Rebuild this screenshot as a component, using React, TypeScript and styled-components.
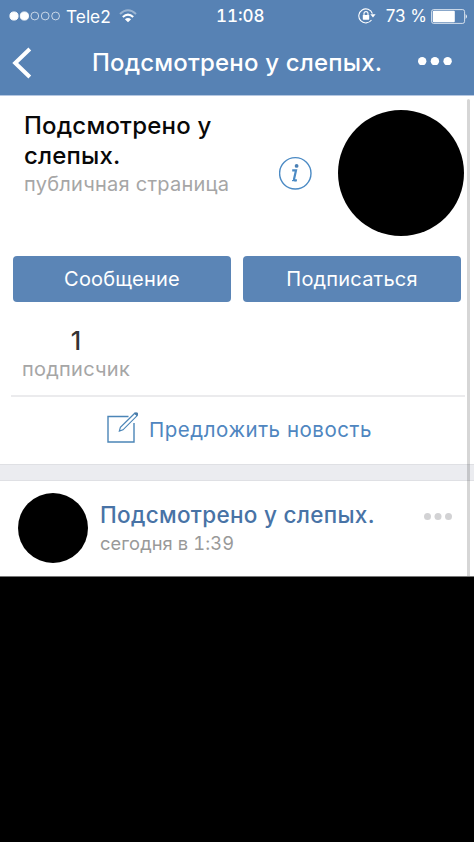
import React from "react";
import styled, { createGlobalStyle } from "styled-components";

const GlobalStyle = createGlobalStyle`
  * { box-sizing: border-box; }
  body { margin: 0; background: #000; font-family: Inter, "Liberation Sans", sans-serif; }
`;

const Screen = styled.main`
  width: 474px;
  height: 842px;
  overflow: hidden;
  background: #000;
`;

const Header = styled.header`
  height: 96px;
  background: #5782b4;
  border-bottom: 1px solid #b5c7e1;
  color: #fff;
`;

const StatusBar = styled.div`
  display: grid;
  grid-template-columns: 216px 1fr auto;
  align-items: center;
  height: 31px;
  padding: 0 6px 0 0;
  line-height: 31px;
`;

const Carrier = styled.div`
  display: flex;
  align-items: center;
  padding-left: 9px;
`;

const CarrierName = styled.span`
  width: 44px;
  margin: 0 9px 0 5px;
  font-size: 17.3px;
`;

const Clock = styled.span`
  padding-top: 1px;
  font-size: 17px;
  font-weight: 500;
  font-variant-numeric: tabular-nums;
`;

const Power = styled.div`
  display: flex;
  align-items: center;
`;

const Percent = styled.span`
  padding-top: 1px;
  margin: 0 4px 0 10px;
  font-size: 17px;
`;

const NavBar = styled.nav`
  display: flex;
  align-items: center;
  height: 64px;
  padding: 0 22px 0 12px;
`;

const NavTitle = styled.h1`
  flex: 1;
  margin: 0 0 0 60px;
  font-size: 24px;
  font-weight: 500;
  letter-spacing: 0.18px;
  line-height: 32px;
  white-space: nowrap;
`;

const Content = styled.div`
  position: relative;
  height: 481px;
  border-bottom: 1px solid #777;
  background: #fff;
`;

const ScrollBar = styled.div`
  position: absolute;
  top: 3px;
  right: 4px;
  bottom: 0;
  width: 3px;
  border-radius: 2px 2px 0 0;
  background: rgba(0, 0, 0, 0.16);
`;

const Profile = styled.section`
  display: flex;
  height: 160px;
  padding: 14px 9px 0 24px;
`;

const ProfileText = styled.div`
  width: 255px;
`;

const ProfileName = styled.h2`
  margin: 1px 0 0;
  font-size: 24px;
  font-weight: 500;
  letter-spacing: 0.2px;
  line-height: 29.5px;
  color: #080808;
`;

const Caption = styled.div`
  font-size: 20px;
  letter-spacing: 0.25px;
  line-height: 28px;
  color: #a6a6a6;
`;

const InfoIcon = styled.svg`
  flex: none;
  margin: 46px 25px 0 0;
`;

const Avatar = styled.div<{ $size: number }>`
  flex: none;
  width: ${(p) => p.$size}px;
  height: ${(p) => p.$size}px;
  border-radius: 50%;
  background: #000;
`;

const Actions = styled.div`
  display: flex;
  gap: 12px;
  padding-left: 13px;
`;

const ActionButton = styled.button`
  width: 218px;
  height: 46px;
  padding: 0;
  border: 0;
  border-radius: 4px;
  background: #5b85b6;
  color: #fff;
  font: 400 20px/46px Inter, "Liberation Sans", sans-serif;
  letter-spacing: 0.2px;
`;

const Counters = styled.section`
  height: 95px;
  margin: 0 9px 0 11px;
  padding-top: 25px;
  border-bottom: 2px solid #ebebed;
`;

const Counter = styled.div`
  width: 130px;
  text-align: center;
`;

const CounterValue = styled.div`
  font-size: 25px;
  font-weight: 500;
  line-height: 28px;
  color: #333;
`;

const Suggest = styled.a`
  display: flex;
  height: 67px;
  padding: 13px 0 0 106px;
  color: #4f86c0;
  font-size: 20.5px;
  letter-spacing: 0.53px;
  line-height: 39px;
`;

const SuggestLabel = styled.span`
  margin-left: 10px;
`;

const Divider = styled.div`
  height: 17px;
  border: solid #dfe0e4;
  border-width: 1px 0;
  background: #ebecf0;
`;

const Post = styled.article`
  display: flex;
  height: 95px;
  padding: 12px 22px 0 18px;
`;

const PostText = styled.div`
  flex: 1;
  padding: 7px 0 0 12px;
`;

const PostAuthor = styled.div`
  font-size: 22.5px;
  font-weight: 500;
  letter-spacing: 0.3px;
  line-height: 30px;
  color: #4873a6;
`;

const PostDate = styled.div`
  font-size: 18.3px;
  letter-spacing: 0.1px;
  line-height: 26px;
  color: #999;
  font-variant-numeric: tabular-nums;
`;

const DotsIcon = styled.svg<{ $lift: number }>`
  flex: none;
  margin-bottom: ${(p) => p.$lift}px;
`;

type DotsProps = { r: number; step: number; color: string; top?: number; lift?: number };

const Dots = ({ r, step, color, top = 0, lift = 0 }: DotsProps) => (
  <DotsIcon $lift={lift} width={2 * step + 2 * r} height={2 * r + top * 2} fill={color}>
    {[0, 1, 2].map((i) => (
      <circle key={i} cx={r + i * step} cy={r + top} r={r} />
    ))}
  </DotsIcon>
);

const Signal = () => (
  <svg width="52" height="12" fill="none" stroke="#fff" strokeWidth="0.9">
    {[0, 1, 2, 3, 4].map((i) => (
      <circle
        key={i}
        cx={5 + i * 10.4}
        cy="6"
        r={i < 2 ? 4.1 : 3.9}
        fill={i < 2 ? "#fff" : "none"}
        strokeOpacity={i < 2 ? 1 : 0.75}
      />
    ))}
  </svg>
);

const Wifi = () => (
  <svg width="18" height="14" viewBox="0 0 18 14" fill="none" stroke="#fff" strokeWidth="2">
    <path d="M1 5Q9-2.4 17 5" opacity="0.4" />
    <path d="M3.8 8Q9 3.2 14.2 8" />
    <path d="M9 13.3L5.9 10.3Q9 7.8 12.1 10.3Z" fill="#fff" stroke="none" />
  </svg>
);

const RotationLock = () => (
  <svg width="18" height="16" viewBox="0 0 18 16" fill="none" stroke="#fff" strokeWidth="1.1">
    <path d="M14.4 5.6A7 7 0 1 0 13.5 12" />
    <path d="M12.3 6.2H17.6L15 9.6Z" fill="#fff" stroke="none" />
    <rect x="4.8" y="6.9" width="6.4" height="4.8" rx="0.6" fill="#fff" stroke="none" />
    <path d="M6 7V5.6a2 2 0 0 1 4 0V7" />
  </svg>
);

const Battery = () => (
  <svg width="37" height="15" viewBox="0 0 37 15">
    <rect x="0.6" y="0.6" width="33" height="13.8" rx="2" fill="none" stroke="#fff" strokeOpacity="0.75" />
    <rect x="1.8" y="1.8" width="22" height="11.4" rx="1" fill="#fff" />
    <path d="M34.7 5Q37 7.5 34.7 10Z" fill="#fff" />
  </svg>
);

const Back = () => (
  <svg width="20" height="32" viewBox="0 0 20 32" fill="none" stroke="#fff" strokeWidth="4">
    <path d="M17.8 2L3.2 16L17.8 30" />
  </svg>
);

const Info = () => (
  <InfoIcon width="34" height="35" viewBox="0 0 34 35" fill="none" stroke="#4b8ac4" strokeWidth="1.4">
    <circle cx="16.3" cy="17.3" r="15.7" />
    <circle cx="17.6" cy="9.9" r="1.9" fill="#4b80b5" stroke="none" />
    <path d="M13.2 14.4H17L15 23.2Q14.8 24.6 17.8 24.2" strokeWidth="2.2" />
    <path d="M13 24.6H17.6" strokeWidth="1.2" />
  </InfoIcon>
);

const Compose = () => (
  <svg width="33" height="33" viewBox="0 0 33 33" fill="none" stroke="#4b85b7" strokeWidth="1.4">
    <path d="M22.5 6.5H2V32H28V13" />
    <path d="M13.4 21L14.4 17.2L28.8 3.2L31.2 5.6L17 19.8Z" strokeWidth="1.2" />
    <path d="M28.2 3.6L29.6 2.2Q32.4 2 32 4.6L30.8 6.1Z" fill="#4b7ca9" stroke="none" />
  </svg>
);

export default function App() {
  return (
    <>
      <GlobalStyle />
      <Screen>
        <Header>
          <StatusBar>
            <Carrier>
              <Signal />
              <CarrierName>Tele2</CarrierName>
              <Wifi />
            </Carrier>
            <Clock>11:08</Clock>
            <Power>
              <RotationLock />
              <Percent>73 %</Percent>
              <Battery />
            </Power>
          </StatusBar>
          <NavBar>
            <Back />
            <NavTitle>Подсмотрено у слепых.</NavTitle>
            <Dots r={4.2} step={12.7} color="#fff" lift={4} />
          </NavBar>
        </Header>
        <Content>
          <Profile>
            <ProfileText>
              <ProfileName>
                Подсмотрено у<br />слепых.
              </ProfileName>
              <Caption>публичная страница</Caption>
            </ProfileText>
            <Info />
            <Avatar $size={126} />
          </Profile>
          <Actions>
            <ActionButton>Сообщение</ActionButton>
            <ActionButton>Подписаться</ActionButton>
          </Actions>
          <Counters>
            <Counter>
              <CounterValue>1</CounterValue>
              <Caption>подписчик</Caption>
            </Counter>
          </Counters>
          <Suggest>
            <Compose />
            <SuggestLabel>Предложить новость</SuggestLabel>
          </Suggest>
          <Divider />
          <Post>
            <Avatar $size={70} />
            <PostText>
              <PostAuthor>Подсмотрено у слепых.</PostAuthor>
              <PostDate>сегодня в 1:39</PostDate>
            </PostText>
            <Dots r={3.5} step={10.5} color="#d2d2d4" top={20} />
          </Post>
          <ScrollBar />
        </Content>
      </Screen>
    </>
  );
}
